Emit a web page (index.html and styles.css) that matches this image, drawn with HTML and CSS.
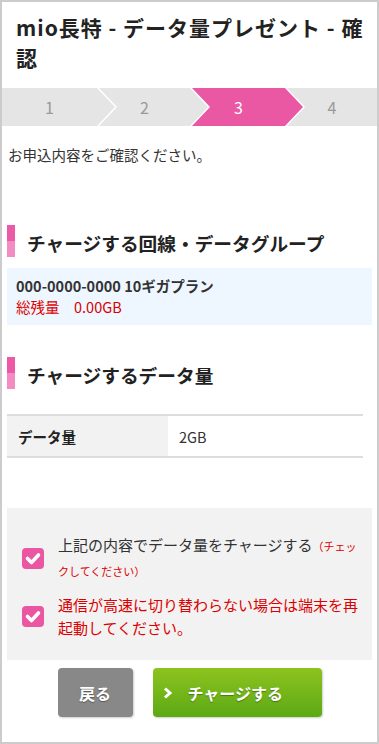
FILE: index.html
```html
<!DOCTYPE html>
<html lang="ja">
<head>
    <meta charset="UTF-8">
    <meta name="viewport" content="width=device-width, initial-scale=1.0">
    <title>mio長特 - データ量プレゼント - 確認</title>
    <link rel="stylesheet" href="styles.css">
</head>
<body>
    <div class="page">
        <h1 class="page-title">mio長特 - データ量プレゼント - 確認</h1>

        <ol class="steps">
            <li class="step first">1</li>
            <li class="step">2</li>
            <li class="step current">3</li>
            <li class="step last">4</li>
        </ol>

        <div class="content">
            <p class="lead">お申込内容をご確認ください。</p>

            <h2 class="section-title"><span>チャージする回線・データグループ</span></h2>
            <div class="line-box">
                <p class="line-name">000-0000-0000 10ギガプラン</p>
                <p class="line-rest">総残量　0.00GB</p>
            </div>

            <h2 class="section-title second"><span>チャージするデータ量</span></h2>
            <table class="detail-table">
                <tr>
                    <th>データ量</th>
                    <td>2GB</td>
                </tr>
            </table>

            <div class="agree-box">
                <label class="agree">
                    <span class="checkbox">
                        <svg viewBox="0 0 22 21" width="22" height="21"><path d="M5.5 10.5 L9.5 14.5 L16.5 7" fill="none" stroke="#fff" stroke-width="3.6" stroke-linecap="round" stroke-linejoin="round"/></svg>
                    </span>
                    <span class="agree-text">上記の内容でデータ量をチャージする<small class="note">（チェックしてください）</small></span>
                </label>
                <label class="agree warn">
                    <span class="checkbox">
                        <svg viewBox="0 0 22 21" width="22" height="21"><path d="M5.5 10.5 L9.5 14.5 L16.5 7" fill="none" stroke="#fff" stroke-width="3.6" stroke-linecap="round" stroke-linejoin="round"/></svg>
                    </span>
                    <span class="agree-text">通信が高速に切り替わらない場合は端末を再起動してください。</span>
                </label>
            </div>

            <div class="actions">
                <button class="btn btn-back">戻る</button>
                <button class="btn btn-charge">
                    <svg viewBox="0 0 10 12" width="10" height="12"><path d="M2 1.5 L7 6 L2 10.5" fill="none" stroke="#fff" stroke-width="3" stroke-linejoin="miter"/></svg>
                    <span>チャージする</span>
                </button>
            </div>
        </div>
    </div>
</body>
</html>
```

FILE: styles.css
```css
* {
    box-sizing: border-box;
}

body {
    margin: 0;
    font-family: "Noto Sans CJK JP", "Noto Sans", sans-serif;
    color: #333;
    background: #fff;
}

.page {
    width: 379px;
    height: 744px;
    border: 2px solid #ccc;
    overflow: hidden;
}

.page-title {
    margin: 0 0 16px;
    padding: 10px 10px 0 14px;
    font-size: 21px;
    line-height: 30px;
    letter-spacing: 1px;
    font-weight: bold;
    color: #222;
}

/* step bar */
.steps {
    display: flex;
    margin: 0;
    padding: 0;
    list-style: none;
    height: 38px;
    background: #fff;
}

.step {
    flex: none;
    width: 109px;
    margin-left: -16px;
    padding-right: 18px;
    text-align: center;
    line-height: 38px;
    font-size: 16px;
    color: #999;
    background: #e5e5e5;
    clip-path: polygon(0 0, calc(100% - 18px) 0, 100% 50%, calc(100% - 18px) 100%, 0 100%, 18px 50%);
}

.step.first {
    width: 113px;
    margin-left: 0;
    clip-path: polygon(0 0, calc(100% - 18px) 0, 100% 50%, calc(100% - 18px) 100%, 0 100%);
}

.step.current {
    width: 111px;
    background: #ea58a4;
    color: #fff;
}

.step.last {
    flex: 1;
    padding-right: 0;
    clip-path: polygon(0 0, 100% 0, 100% 100%, 0 100%, 18px 50%);
}

.content {
    padding: 0 5px;
}

.lead {
    margin: 18px 0 0 1px;
    font-size: 14.5px;
    line-height: 21px;
}

.section-title {
    display: flex;
    align-items: center;
    margin: 60px 0 0;
    font-size: 18.7px;
    font-weight: bold;
    color: #222;
    line-height: 24px;
}

.section-title::before {
    content: "";
    flex: none;
    width: 8px;
    height: 32px;
    background: linear-gradient(#ec5aa7 50%, #f48cc4 50%);
}

.section-title span {
    padding: 4px 0 0 12px;
}

.section-title.second {
    margin-top: 32px;
}

.line-box {
    margin-top: 11px;
    padding: 7px 9px 8px;
    background: #eef7ff;
    font-size: 14.5px;
    line-height: 21px;
}

.line-box p {
    margin: 0;
}

.line-name {
    font-weight: bold;
    color: #333;
}

.line-rest {
    color: #d00;
}

.detail-table {
    width: 356px;
    margin-top: 25px;
    border-collapse: collapse;
    border-top: 2px solid #ddd;
    border-bottom: 2px solid #ddd;
    font-size: 14.5px;
}

.detail-table th,
.detail-table td {
    height: 42px;
    padding: 0 11px;
    text-align: left;
}

.detail-table th {
    width: 161px;
    background: #f2f2f2;
    font-weight: bold;
    color: #222;
}

.agree-box {
    margin-top: 50px;
    padding: 25px 10px 21px 15px;
    background: #f2f2f2;
    display: flex;
    flex-direction: column;
    gap: 10px;
}

.agree {
    display: flex;
    align-items: center;
    gap: 14px;
    font-size: 15px;
    line-height: 23px;
    color: #333;
}

.checkbox {
    flex: none;
    width: 22px;
    height: 21px;
    border-radius: 4px;
    background: #ea56a2;
    display: flex;
}

.note {
    font-size: 11px;
    color: #d00;
}

.agree.warn {
    color: #d00;
}

.actions {
    display: flex;
    justify-content: center;
    gap: 20px;
    margin-top: 8px;
}

.btn {
    height: 49px;
    border: none;
    border-radius: 4px;
    font-family: inherit;
    font-size: 16px;
    font-weight: bold;
    color: #fff;
    text-shadow: 0 1px 1px rgba(0, 0, 0, 0.35);
    box-shadow: 1px 1px 2px rgba(0, 0, 0, 0.2);
    cursor: pointer;
}

.btn-back {
    width: 75px;
    background: #888;
}

.btn-charge {
    width: 169px;
    display: flex;
    align-items: center;
    gap: 15px;
    padding: 0 0 0 10px;
    background: linear-gradient(#8dc31f, #5ca915);
}
```
